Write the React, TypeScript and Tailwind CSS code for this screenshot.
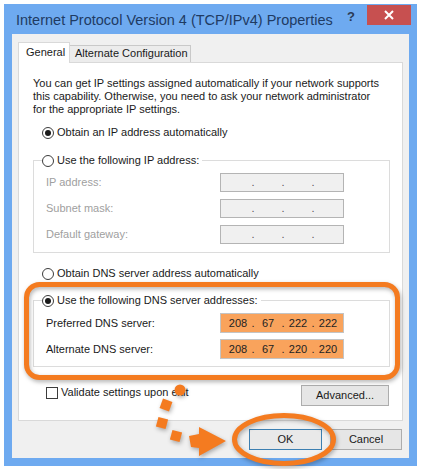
import React from 'react';

function Radio({ checked }: { checked?: boolean }) {
    return (
        <span className="flex h-[12px] w-[12px] shrink-0 items-center justify-center rounded-full border border-[#3c3c3c] bg-white">
            {checked && <span className="h-[6px] w-[6px] rounded-full bg-[#1a1a1a]" />}
        </span>
    );
}

function IpBox({ parts, highlight }: { parts: string[]; highlight?: boolean }) {
    return (
        <div
            className={
                highlight
                    ? 'flex h-[20px] w-[124px] items-center border border-[#c4c4c4] bg-[#f9a35c] pl-[4px] text-[#222]'
                    : 'flex h-[19px] w-[124px] items-center border border-[#b4b4b4] bg-[#f0f0f0] pl-[4px] text-[#555]'
            }
        >
            {parts.map((p, i) => (
                <React.Fragment key={i}>
                    <span className="w-[26px] text-center">{p}</span>
                    {i < 3 && <span className="w-[4px] text-center">.</span>}
                </React.Fragment>
            ))}
        </div>
    );
}

function Row({ label, parts, disabled, highlight }: { label: string; parts: string[]; disabled?: boolean; highlight?: boolean }) {
    return (
        <div className="flex items-center pl-[12px]">
            <span className={disabled ? 'w-[174px] text-[#a0a0a0]' : 'w-[174px]'}>{label}</span>
            <IpBox parts={parts} highlight={highlight} />
        </div>
    );
}

export default function App() {
    const empty = ['', '', '', ''];
    return (
        <div className="relative h-[469px] w-[422px] overflow-hidden bg-white pl-[4px] pt-[4px] font-['Liberation_Sans',Arial,sans-serif] text-[11px] leading-[13px] text-[#1a1a1a]">
            <div className="flex h-[462px] w-[413px] flex-col bg-[#6eaaf0]">
                {/* title bar */}
                <div className="flex h-[30px] shrink-0 items-start pl-[12px] pr-[6px]">
                    <span className="mt-[7px] flex-1 whitespace-nowrap text-[14.5px] leading-[18px] text-[#1f3b63]">
                        Internet Protocol Version 4 (TCP/IPv4) Properties
                    </span>
                    <span className="mr-[12px] mt-[6px] text-[13px] font-bold leading-[13px] text-[#2b3a55]">?</span>
                    <span className="mt-[1px] flex h-[20px] w-[44px] items-center justify-center bg-[#c75050]">
                        <svg width="10" height="10" viewBox="0 0 10 10">
                            <path d="M1 1L9 9M9 1L1 9" stroke="white" strokeWidth="2" />
                        </svg>
                    </span>
                </div>

                <div className="mx-[8px] mb-[8px] flex flex-1 flex-col bg-[#f0f0f0] px-[6px]">
                    {/* tabs */}
                    <div className="mt-[8px] flex h-[20px] items-end">
                        <div className="relative z-10 -mb-px h-[21px] w-[52px] border-x border-t border-[#d9d9d9] bg-white pl-[7px] pt-[3px]">
                            General
                        </div>
                        <div className="h-[17px] w-[121px] whitespace-nowrap border-r border-t border-[#c9c9c9] bg-[#ececec] pl-[5px] pt-[1px]">
                            Alternate Configuration
                        </div>
                    </div>

                    {/* panel */}
                    <div className="flex h-[359px] flex-col border border-[#d9d9d9] bg-white pl-[14px] pt-[14px]">
                        <p className="whitespace-nowrap">
                            You can get IP settings assigned automatically if your network supports
                            <br />
                            this capability. Otherwise, you need to ask your network administrator
                            <br />
                            for the appropriate IP settings.
                        </p>

                        <div className="ml-[9px] mt-[10px] flex h-[13px] items-center gap-[3px]">
                            <Radio checked />
                            <span>Obtain an IP address automatically</span>
                        </div>

                        <div className="mt-[21px] w-[357px] border border-[#dcdcdc] pb-[8px]">
                            <div className="-mt-[7px] ml-[8px] flex h-[13px] w-fit items-center gap-[3px] bg-white pr-[3px]">
                                <Radio />
                                <span>Use the following IP address:</span>
                            </div>
                            <div className="mt-[6px] flex flex-col gap-[7px]">
                                <Row label="IP address:" parts={empty} disabled />
                                <Row label="Subnet mask:" parts={empty} disabled />
                                <Row label="Default gateway:" parts={empty} disabled />
                            </div>
                        </div>

                        <div className="ml-[9px] mt-[14px] flex h-[13px] items-center gap-[3px]">
                            <Radio />
                            <span>Obtain DNS server address automatically</span>
                        </div>

                        <div className="mt-[20px] w-[357px] border border-[#dcdcdc] pb-[7px]">
                            <div className="-mt-[7px] ml-[8px] flex h-[13px] w-fit items-center gap-[3px] bg-white pr-[3px]">
                                <Radio checked />
                                <span>Use the following DNS server addresses:</span>
                            </div>
                            <div className="mt-[6px] flex flex-col gap-[6px]">
                                <Row label="Preferred DNS server:" parts={['208', '67', '222', '222']} highlight />
                                <Row label="Alternate DNS server:" parts={['208', '67', '220', '220']} highlight />
                            </div>
                        </div>

                        <div className="mt-[18px] flex w-[356px] items-start justify-between">
                            <div className="ml-[13px] mt-[1px] flex items-center gap-[3px]">
                                <span className="h-[12px] w-[12px] border border-[#3c3c3c] bg-white" />
                                <span>Validate settings upon exit</span>
                            </div>
                            <div className="flex h-[21px] w-[88px] items-center justify-center border border-[#adadad] bg-[#e6e6e6]">
                                Advanced...
                            </div>
                        </div>
                    </div>

                    {/* buttons */}
                    <div className="mt-[8px] flex justify-end gap-[8px] pr-px">
                        <div className="flex h-[21px] w-[73px] items-center justify-center border border-[#3c7fb1] bg-[#e9e9e9]">OK</div>
                        <div className="flex h-[21px] w-[72px] items-center justify-center border border-[#adadad] bg-[#e6e6e6]">Cancel</div>
                    </div>
                </div>
            </div>

            {/* orange annotations */}
            <svg
                className="pointer-events-none absolute left-0 top-0 drop-shadow-[1px_2px_2px_rgba(0,0,0,0.3)]"
                width="422"
                height="469"
                viewBox="0 0 422 469"
            >
                <rect x="26.5" y="284.5" width="371" height="93" rx="13" fill="none" stroke="#f47b20" strokeWidth="5" />
                <ellipse cx="284" cy="439.5" rx="49.5" ry="24" fill="none" stroke="#f47b20" strokeWidth="5" />
                <circle cx="180" cy="390" r="5.5" fill="#f47b20" />
                <rect x="161" y="400" width="10" height="10" fill="#f47b20" transform="rotate(20 166 405)" />
                <rect x="157" y="418" width="10" height="10" fill="#f47b20" transform="rotate(15 162 423)" />
                <rect x="171" y="431" width="10" height="10" fill="#f47b20" transform="rotate(15 176 436)" />
                <polygon points="189,436 199,434 199,427 226,441 199,456 199,448 191,447" fill="#f47b20" />
            </svg>
        </div>
    );
}
